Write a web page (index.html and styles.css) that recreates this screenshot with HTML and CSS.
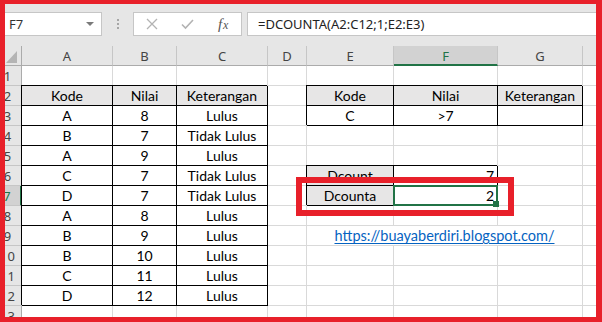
FILE: index.html
```html
<!DOCTYPE html>
<html lang="id">

<head>
    <meta charset="UTF-8">
    <title>DCOUNTA</title>
    <link rel="stylesheet" href="styles.css">
</head>

<body>
    <div class="window">
        <div class="formula-bar">
            <div class="name-box"><span>F7</span><span class="caret"></span></div>
            <div class="grip"><span></span><span></span><span></span></div>
            <div class="fx-buttons">
                <span class="btn">
                    <svg width="12" height="12" viewBox="0 0 12 12"><path d="M1 1 L11 11 M11 1 L1 11" stroke="#b3b3b3" stroke-width="1.3" fill="none"/></svg>
                </span>
                <span class="btn">
                    <svg width="13" height="12" viewBox="0 0 13 12"><path d="M1 6.5 L4.5 10 L12 2" stroke="#b3b3b3" stroke-width="1.6" fill="none"/></svg>
                </span>
                <span class="btn fx">f<small>x</small></span>
            </div>
            <div class="formula">=DCOUNTA(A2:C12;1;E2:E3)</div>
        </div>

        <div class="sheet">
            <div class="corner"></div><div class="col">A</div><div class="col">B</div><div class="col">C</div><div class="col">D</div><div class="col">E</div><div class="col on">F</div><div class="col">G</div><div class="col"></div>

            <div class="rh">1</div><div></div><div></div><div></div><div></div><div></div><div></div><div></div><div></div>

            <div class="rh">2</div><div class="t hd">Kode</div><div class="t hd">Nilai</div><div class="t hd">Keterangan</div><div></div><div class="t hd">Kode</div><div class="t hd">Nilai</div><div class="t hd">Keterangan</div><div></div>

            <div class="rh">3</div><div class="t">A</div><div class="t">8</div><div class="t">Lulus</div><div></div><div class="t">C</div><div class="t">&gt;7</div><div class="t"></div><div></div>

            <div class="rh">4</div><div class="t">B</div><div class="t">7</div><div class="t">Tidak Lulus</div><div></div><div></div><div></div><div></div><div></div>

            <div class="rh">5</div><div class="t">A</div><div class="t">9</div><div class="t">Lulus</div><div></div><div></div><div></div><div></div><div></div>

            <div class="rh">6</div><div class="t">C</div><div class="t">7</div><div class="t">Tidak Lulus</div><div></div><div class="t hd">Dcount</div><div class="t r">7</div><div></div><div></div>

            <div class="rh on">7</div><div class="t">D</div><div class="t">7</div><div class="t">Tidak Lulus</div><div></div><div class="t hd">Dcounta</div><div class="t r sel">2</div><div></div><div></div>

            <div class="rh">8</div><div class="t">A</div><div class="t">8</div><div class="t">Lulus</div><div></div><div></div><div></div><div></div><div></div>

            <div class="rh">9</div><div class="t">B</div><div class="t">9</div><div class="t">Lulus</div><div></div><div class="link">https://buayaberdiri.blogspot.com/</div><div></div>

            <div class="rh">10</div><div class="t">B</div><div class="t">10</div><div class="t">Lulus</div><div></div><div></div><div></div><div></div><div></div>

            <div class="rh">11</div><div class="t">C</div><div class="t">11</div><div class="t">Lulus</div><div></div><div></div><div></div><div></div><div></div>

            <div class="rh">12</div><div class="t">D</div><div class="t">12</div><div class="t">Lulus</div><div></div><div></div><div></div><div></div><div></div>

            <div class="rh">13</div><div></div><div></div><div></div><div></div><div></div><div></div><div></div><div></div>
        </div>

        <div class="frame"></div>
        <div class="callout"></div>
    </div>
</body>

</html>
```

FILE: styles.css
```css
* {
    box-sizing: border-box;
}

body {
    margin: 0;
    background-color: #fff;
    font-family: Lato, "Liberation Sans", sans-serif;
}

.window {
    position: relative;
    width: 602px;
    height: 322px;
    overflow: hidden;
    background-color: #fff;
}

/* formula bar */
.formula-bar {
    display: flex;
    height: 46px;
    padding: 12px 0 0 2px;
    background-color: #e6e6e6;
    font-family: "Noto Sans", sans-serif;
    font-size: 13px;
    color: #333;
}

.name-box {
    display: flex;
    align-items: center;
    justify-content: space-between;
    width: 100px;
    height: 24px;
    padding: 0 7px 0 6px;
    background-color: #fff;
    border: 1px solid #c6c6c6;
}

.caret {
    border-left: 4px solid transparent;
    border-right: 4px solid transparent;
    border-top: 4px solid #7a7a7a;
}

.grip {
    display: flex;
    flex-direction: column;
    align-items: center;
    justify-content: center;
    gap: 2px;
    width: 31px;
    height: 24px;
}

.grip span {
    width: 2px;
    height: 2px;
    background-color: #a6a6a6;
}

.fx-buttons {
    display: flex;
    width: 109px;
    height: 24px;
    background-color: #fff;
    border: 1px solid #c6c6c6;
}

.btn {
    display: flex;
    align-items: center;
    justify-content: center;
    width: 36px;
    height: 22px;
}

.fx {
    font-family: "Liberation Serif", serif;
    font-style: italic;
    font-size: 15px;
    color: #555;
}

.fx small {
    font-size: 12px;
    margin-left: 1px;
    margin-top: 3px;
}

.formula {
    flex: 1;
    height: 24px;
    margin-left: 5px;
    padding-left: 10px;
    line-height: 22px;
    background-color: #fff;
    border: 1px solid #c6c6c6;
    color: #222;
}

/* sheet */
.sheet {
    display: grid;
    grid-template-columns: 28px 91px 64px 91px 39px 87px 104px 85px 1fr;
    grid-auto-rows: 20px;
    margin-left: -6px;
    font-size: 14px;
    color: #000;
}

.sheet > div {
    border-right: 1px solid #d9d9d9;
    border-bottom: 1px solid #d9d9d9;
    padding-top: 1px;
    line-height: 18px;
    text-align: center;
    white-space: nowrap;
    overflow: hidden;
}

.sheet > .corner,
.sheet > .col,
.sheet > .rh {
    background-color: #e6e6e6;
    font-family: "Noto Sans", sans-serif;
    font-size: 13px;
    color: #444;
}

.sheet > .col {
    border-right-color: #c6c6c6;
    border-bottom-color: #ababab;
}

.sheet > .rh {
    border-right-color: #ababab;
    border-bottom-color: #c6c6c6;
}

.sheet > .corner {
    position: relative;
    border-bottom-color: #ababab;
    border-right-color: #ababab;
}

.corner::after {
    content: "";
    position: absolute;
    right: 4px;
    bottom: 2px;
    border-left: 11px solid transparent;
    border-bottom: 12px solid #b4b4b4;
}

.sheet > .col.on {
    background-color: #d2d2d2;
    border-bottom: 2px solid #217346;
    color: #217346;
}

.sheet > .rh.on {
    background-color: #d2d2d2;
    border-right: 2px solid #217346;
    color: #217346;
}

/* bordered table cells */
.sheet > .t {
    border-right-color: #000;
    border-bottom-color: #000;
    box-shadow: -1px -1px 0 #000;
}

.sheet > .hd {
    background-color: #e7e6e6;
}

.sheet > .r {
    text-align: right;
    padding-right: 3px;
}

.sheet > .sel {
    position: relative;
    overflow: visible;
    z-index: 1;
}

.sel::after {
    content: "";
    position: absolute;
    left: -1px;
    top: -1px;
    right: -1px;
    bottom: -1px;
    border: 2px solid #217346;
}

.sel::before {
    content: "";
    position: absolute;
    right: -2px;
    bottom: -2px;
    width: 6px;
    height: 6px;
    background-color: #217346;
    z-index: 2;
}

.sheet > .link {
    grid-column: span 3;
    font-size: 14.5px;
    color: #0563c1;
    text-decoration: underline;
    text-underline-offset: 2px;
}

/* red annotation */
.frame {
    position: absolute;
    inset: 0;
    border-style: solid;
    border-color: #e8202a;
    border-width: 4px 6px 5px 5px;
}

.callout {
    position: absolute;
    left: 296px;
    top: 177px;
    width: 218px;
    height: 39px;
    border: 6px solid #e8202a;
}
```
